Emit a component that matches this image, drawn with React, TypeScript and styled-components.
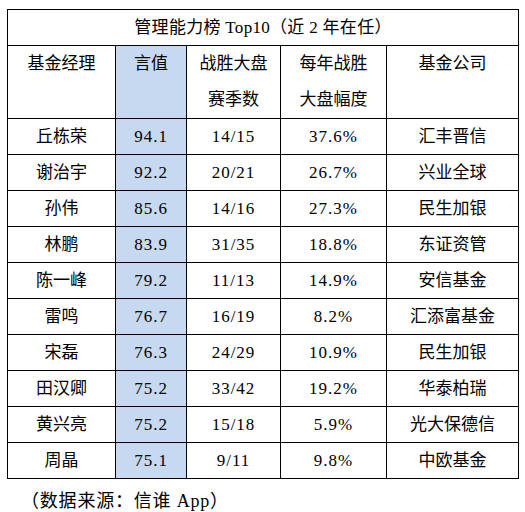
import React from 'react';
import styled, { createGlobalStyle } from 'styled-components';

const GlobalStyle = createGlobalStyle`
  html, body {
    margin: 0;
    padding: 0;
    background: #fff;
  }
  body {
    font-family: "Liberation Serif", "Noto Sans CJK SC", serif;
    color: #000;
  }
`;

const Page = styled.div`
  width: 525px;
  height: 512px;
  padding: 9px 0 0 7px;
  box-sizing: border-box;
`;

const Table = styled.table`
  border-collapse: collapse;
  table-layout: fixed;
  width: 511px;
  font-size: 17px;
`;

const Cell = styled.td<{ $hl?: boolean }>`
  border: 1px solid #000;
  padding: 0;
  height: 35px;
  line-height: 35px;
  text-align: center;
  vertical-align: middle;
  white-space: nowrap;
  background: ${(p) => (p.$hl ? '#c6d9f0' : '#fff')};
`;

const HeadCell = styled(Cell)`
  height: 71px;
  line-height: 36px;
  vertical-align: top;
`;

const TitleCell = styled(Cell)`
  letter-spacing: 0.3px;
  text-spacing-trim: space-all;
`;

const Num = styled.span`
  letter-spacing: 1px;
`;

const Source = styled.div`
  margin: 10px 0 0 14px;
  font-size: 18px;
  line-height: 24px;
  letter-spacing: 0.8px;
  text-spacing-trim: space-all;
`;

const rows = [
  ['丘栋荣', '94.1', '14/15', '37.6%', '汇丰晋信'],
  ['谢治宇', '92.2', '20/21', '26.7%', '兴业全球'],
  ['孙伟', '85.6', '14/16', '27.3%', '民生加银'],
  ['林鹏', '83.9', '31/35', '18.8%', '东证资管'],
  ['陈一峰', '79.2', '11/13', '14.9%', '安信基金'],
  ['雷鸣', '76.7', '16/19', '8.2%', '汇添富基金'],
  ['宋磊', '76.3', '24/29', '10.9%', '民生加银'],
  ['田汉卿', '75.2', '33/42', '19.2%', '华泰柏瑞'],
  ['黄兴亮', '75.2', '15/18', '5.9%', '光大保德信'],
  ['周晶', '75.1', '9/11', '9.8%', '中欧基金'],
];

export default function App() {
  return (
    <Page>
      <GlobalStyle />
      <Table>
        <colgroup>
          <col style={{ width: 108 }} />
          <col style={{ width: 71 }} />
          <col style={{ width: 94 }} />
          <col style={{ width: 106 }} />
          <col style={{ width: 132 }} />
        </colgroup>
        <tbody>
          <tr>
            <TitleCell colSpan={5}>管理能力榜 Top10（近 2 年在任）</TitleCell>
          </tr>
          <tr>
            <HeadCell>基金经理</HeadCell>
            <HeadCell $hl>言值</HeadCell>
            <HeadCell>
              战胜大盘
              <br />
              赛季数
            </HeadCell>
            <HeadCell>
              每年战胜
              <br />
              大盘幅度
            </HeadCell>
            <HeadCell>基金公司</HeadCell>
          </tr>
          {rows.map((r) => (
            <tr key={r[0]}>
              <Cell>{r[0]}</Cell>
              <Cell $hl>
                <Num>{r[1]}</Num>
              </Cell>
              <Cell>
                <Num>{r[2]}</Num>
              </Cell>
              <Cell>
                <Num>{r[3]}</Num>
              </Cell>
              <Cell>{r[4]}</Cell>
            </tr>
          ))}
        </tbody>
      </Table>
      <Source>（数据来源：信谁 App）</Source>
    </Page>
  );
}
